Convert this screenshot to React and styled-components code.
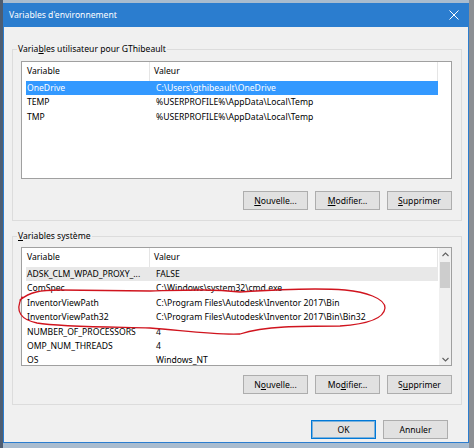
import React from "react";
import styled, { createGlobalStyle } from "styled-components";

const GlobalStyle = createGlobalStyle`
  html, body { margin: 0; padding: 0; }
  body {
    width: 474px;
    height: 448px;
    overflow: hidden;
    background: linear-gradient(90deg, #4d5d72 0, #4d5d72 3px, #a9bccf 3px, #a9bccf 469px, #8c8f94 469px);
    font-family: "Noto Sans", "Liberation Sans", sans-serif;
  }
`;

const Page = styled.div`
  position: relative;
  box-sizing: border-box;
  width: 474px;
  height: 448px;
  padding: 3px 5px 5px 3px;
`;

const Window = styled.div`
  box-sizing: border-box;
  width: 466px;
  height: 440px;
  border: 1px solid #2b7dcf;
  border-top: none;
  background: #f0f0f0;
  display: flex;
  flex-direction: column;
`;

const TitleBar = styled.div`
  height: 24px;
  background: #2b7dcf;
  color: #ffffff;
  display: flex;
  align-items: center;
  justify-content: space-between;
  padding-left: 5px;
  font-size: 8.6px;
`;

const CloseButton = styled.div`
  width: 28px;
  height: 24px;
  display: flex;
  align-items: center;
  justify-content: center;
`;

const Content = styled.div`
  display: flex;
  flex-direction: column;
  padding: 15px 6px 0 8px;
  font-size: 8.6px;
  color: #000;
`;

const Group = styled.fieldset`
  margin: ${(p) => (p.$first ? "0" : "8px")} 0 0 0;
  padding: 0 9px 10px 8px;
  border: 1px solid #dcdcdc;
  min-width: 0;
`;

const Legend = styled.legend`
  margin-left: -4px;
  padding: 0 1px;
  line-height: 14px;
  font-size: 8.6px;
`;

const Key = styled.span`
  text-decoration: underline;
  text-underline-offset: 1px;
`;

const List = styled.div`
  margin-top: ${(p) => p.$top}px;
  height: ${(p) => p.$height}px;
  box-sizing: border-box;
  border: 1px solid #a0a0a0;
  background: #ffffff;
  display: flex;
  overflow: hidden;
`;

const ListBody = styled.div`
  flex: 1;
  display: flex;
  flex-direction: column;
`;

const Header = styled.div`
  display: grid;
  grid-template-columns: 128px 288px;
  height: 19px;
  line-height: 19px;
`;

const HeaderCell = styled.div`
  padding-left: ${(p) => (p.$first ? 5 : 4)}px;
  border-right: 1px solid #e5e5e5;
`;

const Row = styled.div`
  display: grid;
  grid-template-columns: 124px 288px;
  margin-left: 4px;
  width: 412px;
  height: 14.4px;
  line-height: 14.4px;
  white-space: nowrap;
  background: ${(p) =>
    p.$state === "focus" ? "#3399ff" : p.$state === "idle" ? "#e8e8e8" : "transparent"};
  color: ${(p) => (p.$state === "focus" ? "#ffffff" : "#000000")};
`;

const Cell = styled.div`
  padding-left: ${(p) => (p.$first ? 1 : 6)}px;
  overflow: hidden;
`;

const ScrollBar = styled.div`
  width: 12px;
  background: #f0f0f0;
  display: flex;
  flex-direction: column;
  align-items: center;
`;

const ScrollArrow = styled.div`
  height: 12px;
  width: 12px;
  display: flex;
  align-items: center;
  justify-content: center;
`;

const ScrollTrack = styled.div`
  flex: 1;
  width: 100%;
  display: flex;
  flex-direction: column;
  align-items: center;
`;

const Thumb = styled.div`
  margin-top: 2px;
  width: 10px;
  height: 26px;
  background: #cdcdcd;
`;

const ButtonRow = styled.div`
  display: flex;
  justify-content: flex-end;
  gap: 7px;
  margin-top: ${(p) => p.$top}px;
  margin-right: ${(p) => p.$right || 0}px;
`;

const Button = styled.div`
  box-sizing: border-box;
  width: 65px;
  height: 19px;
  display: flex;
  align-items: center;
  justify-content: center;
  background: #e1e1e1;
  border: 1px solid ${(p) => (p.$default ? "#0078d7" : "#adadad")};
  box-shadow: ${(p) => (p.$default ? "inset 0 0 0 1px rgba(0,120,215,0.45)" : "none")};
  font-size: 8.6px;
`;

const Annotation = styled.svg`
  position: absolute;
  left: 0;
  top: 0;
  pointer-events: none;
`;

const userVars = [
  ["OneDrive", "C:\\Users\\gthibeault\\OneDrive", "focus"],
  ["TEMP", "%USERPROFILE%\\AppData\\Local\\Temp"],
  ["TMP", "%USERPROFILE%\\AppData\\Local\\Temp"],
];

const systemVars = [
  ["ADSK_CLM_WPAD_PROXY_...", "FALSE", "idle"],
  ["ComSpec", "C:\\Windows\\system32\\cmd.exe"],
  ["InventorViewPath", "C:\\Program Files\\Autodesk\\Inventor 2017\\Bin"],
  ["InventorViewPath32", "C:\\Program Files\\Autodesk\\Inventor 2017\\Bin\\Bin32"],
  ["NUMBER_OF_PROCESSORS", "4"],
  ["OMP_NUM_THREADS", "4"],
  ["OS", "Windows_NT"],
];

const Chevron = ({ up }) => (
  <svg width="7" height="5" viewBox="0 0 7 5">
    <path
      d={up ? "M0.5 4 L3.5 1 L6.5 4" : "M0.5 1 L3.5 4 L6.5 1"}
      fill="none"
      stroke="#606060"
      strokeWidth="1.1"
    />
  </svg>
);

const VarList = ({ rows, top, height, scroll }) => (
  <List $top={top} $height={height}>
    <ListBody>
      <Header>
        <HeaderCell $first>Variable</HeaderCell>
        <HeaderCell>Valeur</HeaderCell>
      </Header>
      {rows.map(([name, value, state]) => (
        <Row key={name} $state={state}>
          <Cell $first>{name}</Cell>
          <Cell>{value}</Cell>
        </Row>
      ))}
    </ListBody>
    {scroll && (
      <ScrollBar>
        <ScrollArrow>
          <Chevron up />
        </ScrollArrow>
        <ScrollTrack>
          <Thumb />
        </ScrollTrack>
        <ScrollArrow>
          <Chevron />
        </ScrollArrow>
      </ScrollBar>
    )}
  </List>
);

const App = () => {
  return (
    <Page>
      <GlobalStyle />
      <Window>
        <TitleBar>
          <span>Variables d'environnement</span>
          <CloseButton>
            <svg width="10" height="10" viewBox="0 0 10 10">
              <path d="M0.5 0.5 L9.5 9.5 M9.5 0.5 L0.5 9.5" stroke="#fff" strokeWidth="1" />
            </svg>
          </CloseButton>
        </TitleBar>
        <Content>
          <Group $first>
            <Legend>
              Varia<Key>b</Key>les utilisateur pour GThibeault
            </Legend>
            <VarList rows={userVars} top={5} height={118} />
            <ButtonRow $top={12}>
              <Button>
                <Key>N</Key>ouvelle...
              </Button>
              <Button>
                <Key>M</Key>odifier...
              </Button>
              <Button>
                <Key>S</Key>upprimer
              </Button>
            </ButtonRow>
          </Group>
          <Group>
            <Legend>
              <Key>V</Key>ariables système
            </Legend>
            <VarList rows={systemVars} top={4} height={119} scroll />
            <ButtonRow $top={9}>
              <Button>
                N<Key>o</Key>uvelle...
              </Button>
              <Button>
                Mo<Key>d</Key>ifier...
              </Button>
              <Button>
                S<Key>u</Key>pprimer
              </Button>
            </ButtonRow>
          </Group>
          <ButtonRow $top={15} $right={14}>
            <Button $default>OK</Button>
            <Button>Annuler</Button>
          </ButtonRow>
        </Content>
      </Window>
      <Annotation width="474" height="448" viewBox="0 0 474 448">
        <path
          d="M20 300 C30 292, 40 290, 60 290 L150 291 C190 290, 210 289, 240 292 C270 290, 320 288, 345 290 C365 292, 385 298, 385 308 C384 318, 370 324, 340 326 C300 326, 265 326, 240 334 C210 335, 180 330, 150 328 C110 327, 60 327, 37 323 C22 320, 14 312, 22 297"
          fill="none"
          stroke="#d0141e"
          strokeWidth="1.3"
          strokeLinecap="round"
        />
      </Annotation>
    </Page>
  );
};

export default App;
